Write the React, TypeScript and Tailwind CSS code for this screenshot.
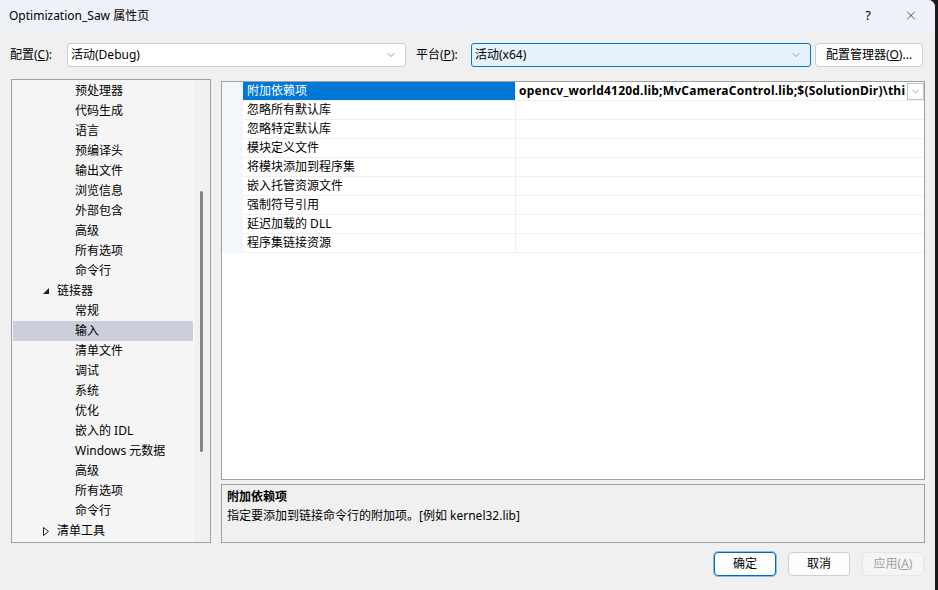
import React from "react";
import { X, ChevronDown } from "lucide-react";

const font = "font-['Noto_Sans','Noto_Sans_CJK_SC',sans-serif]";

type TreeItem = { label: string; depth: 1 | 2; toggle?: "open" | "closed"; selected?: boolean };

const tree: TreeItem[] = [
  { label: "预处理器", depth: 2 },
  { label: "代码生成", depth: 2 },
  { label: "语言", depth: 2 },
  { label: "预编译头", depth: 2 },
  { label: "输出文件", depth: 2 },
  { label: "浏览信息", depth: 2 },
  { label: "外部包含", depth: 2 },
  { label: "高级", depth: 2 },
  { label: "所有选项", depth: 2 },
  { label: "命令行", depth: 2 },
  { label: "链接器", depth: 1, toggle: "open" },
  { label: "常规", depth: 2 },
  { label: "输入", depth: 2, selected: true },
  { label: "清单文件", depth: 2 },
  { label: "调试", depth: 2 },
  { label: "系统", depth: 2 },
  { label: "优化", depth: 2 },
  { label: "嵌入的 IDL", depth: 2 },
  { label: "Windows 元数据", depth: 2 },
  { label: "高级", depth: 2 },
  { label: "所有选项", depth: 2 },
  { label: "命令行", depth: 2 },
  { label: "清单工具", depth: 1, toggle: "closed" },
];

const props = [
  "附加依赖项",
  "忽略所有默认库",
  "忽略特定默认库",
  "模块定义文件",
  "将模块添加到程序集",
  "嵌入托管资源文件",
  "强制符号引用",
  "延迟加载的 DLL",
  "程序集链接资源",
];

function Select({ value, focused }: { value: string; focused?: boolean }) {
  return (
    <div
      className={`flex h-6 items-center justify-between rounded-[3px] border pl-[3px] pr-[8px] ${
        focused ? "border-[#0078d7] bg-[#e5f1fb]" : "border-[#cccccc] bg-white"
      }`}
    >
      <span>{value}</span>
      <ChevronDown size={12} strokeWidth={1.2} className="text-[#606060]" />
    </div>
  );
}

export default function App() {
  return (
    <div className={`flex h-[590px] w-[938px] bg-[#1b1b1b] text-[12px] text-black ${font}`}>
      <div className="flex h-full w-[935px] flex-col overflow-hidden rounded-tr-[7px] bg-[#f0f0f0]">
        {/* title bar */}
        <div className="flex h-[31px] shrink-0 items-center bg-[#eef2f8] pl-[9px]">
          <span className="flex-1 text-[12px]">Optimization_Saw 属性页</span>
          <span className="w-[20px] text-center text-[13px]">?</span>
          <span className="ml-[26px] mr-[17px] flex w-[14px] justify-center">
            <X size={15} strokeWidth={1.1} />
          </span>
        </div>

        {/* configuration row */}
        <div className="mt-[12px] flex h-6 items-center pl-[10px]">
          <span className="w-[57px]">
            配置(<span className="underline">C</span>):
          </span>
          <div className="w-[339px]">
            <Select value="活动(Debug)" />
          </div>
          <span className="ml-[10px] w-[55px]">
            平台(<span className="underline">P</span>):
          </span>
          <div className="w-[340px]">
            <Select value="活动(x64)" focused />
          </div>
          <button className="ml-[4px] h-6 w-[108px] rounded-[4px] border border-[#d0d0d0] bg-[#fdfdfd] text-[12px]">
            配置管理器(<span className="underline">O</span>)...
          </button>
        </div>

        {/* main area */}
        <div className="mt-[12px] flex h-[464px] pl-[11px]">
          {/* category tree */}
          <div className="flex w-[200px] border border-[#a0a0a0] bg-[#f5f5f5]">
            <div className="flex-1 pl-[1px] pt-[1px]">
              {tree.map((item, i) => (
                <div
                  key={i}
                  className={`flex h-5 items-center ${item.selected ? "bg-[#cccedb]" : ""} ${
                    item.depth === 2 ? "pl-[62px]" : "pl-[28px]"
                  }`}
                >
                  {item.toggle === "open" && (
                    <svg width="6" height="6" viewBox="0 0 6 6" className="mr-[8px] ml-[2px]">
                      <path d="M6 0 L6 6 L0 6 Z" fill="#1e1e1e" />
                    </svg>
                  )}
                  {item.toggle === "closed" && (
                    <svg width="6" height="9" viewBox="0 0 6 9" className="mr-[8px] ml-[2px]">
                      <path d="M0.5 0.5 L5.5 4.5 L0.5 8.5 Z" fill="none" stroke="#1e1e1e" />
                    </svg>
                  )}
                  <span>{item.label}</span>
                </div>
              ))}
            </div>
            {/* scrollbar */}
            <div className="w-[17px] border-l border-[#fafafa] bg-[#f1f1f1] pl-[6px] pt-[111px]">
              <div className="h-[261px] w-[3px] rounded-full bg-[#858585]" />
            </div>
          </div>

          {/* property grid + description */}
          <div className="ml-[10px] flex w-[704px] flex-col">
            <div className="mt-[2px] h-[400px] border border-[#a0a0a0] bg-white">
              <div className="flex">
                <div className="w-[21px] shrink-0 bg-[#f3f6fb]" />
                <div className="min-w-0 flex-1">
                  {props.map((name, i) => (
                    <div key={name} className="flex h-[19px] border-b border-[#f0f0f0]">
                      <div
                        className={`flex w-[272px] shrink-0 items-center pl-[4px] ${
                          i === 0 ? "bg-[#0078d7] text-white" : ""
                        }`}
                      >
                        {name}
                      </div>
                      <div className="flex min-w-0 flex-1 items-center border-l border-[#f0f0f0]">
                        {i === 0 && (
                          <>
                            <span className="min-w-0 flex-1 overflow-hidden whitespace-nowrap pl-[3px] font-bold tracking-[0.22px]">
                              opencv_world4120d.lib;MvCameraControl.lib;$(SolutionDir)\thi
                            </span>
                            <span className="flex h-[17px] w-[17px] shrink-0 items-center justify-center border border-[#c4c4c4] bg-white">
                              <ChevronDown size={11} strokeWidth={1.2} className="text-[#606060]" />
                            </span>
                          </>
                        )}
                      </div>
                    </div>
                  ))}
                </div>
              </div>
            </div>
            <div className="mt-[4px] h-[59px] border border-[#a0a0a0] bg-[#f0f0f0] px-[5px] pt-[2px] leading-[19px]">
              <div className="font-bold">附加依赖项</div>
              <div>指定要添加到链接命令行的附加项。[例如 kernel32.lib]</div>
            </div>
          </div>
        </div>

        {/* dialog buttons */}
        <div className="mt-[9px] flex justify-end gap-[12px] pr-[11px]">
          <button className="h-6 w-[62px] rounded-[4px] border border-[#0067c0] bg-[#fdfdfd] text-[12px] outline outline-1 outline-[#0067c0]/40">
            确定
          </button>
          <button className="h-6 w-[62px] rounded-[4px] border border-[#d0d0d0] bg-[#fdfdfd] text-[12px]">
            取消
          </button>
          <button className="h-6 w-[62px] rounded-[4px] border border-[#e6e6e6] bg-[#f5f5f5] text-[12px] text-[#a0a0a0]">
            应用(<span className="underline">A</span>)
          </button>
        </div>
      </div>
    </div>
  );
}
